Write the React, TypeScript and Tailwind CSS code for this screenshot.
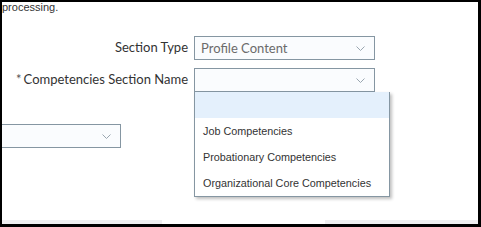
import React from "react";

const Chevron = () => (
  <svg width="9" height="5" viewBox="0 0 9 5" className="shrink-0">
    <path d="M0.5 0.5 L4.5 4.5 L8.5 0.5" fill="none" stroke="#9aa6b0" strokeWidth="1" />
  </svg>
);

const Select = ({ value, className = "" }: { value?: string; className?: string }) => (
  <div
    className={`h-[24px] flex items-center justify-between border border-[#8596a2] bg-[#fafcfe] pl-[6px] pr-[9px] ${className}`}
  >
    <span className="text-[13px] text-[#6b6b6b] leading-none font-['Lato',sans-serif]">{value}</span>
    <Chevron />
  </div>
);

export default function App() {
  const options = ["Job Competencies", "Probationary Competencies", "Organizational Core Competencies"];

  return (
    <div className="w-[481px] h-[227px] bg-black pt-[2px] pl-[2px] pr-[3px] pb-[3px]">
      <div className="relative w-full h-full bg-white flex flex-col overflow-hidden">
        <div className="h-[10px] leading-[10px] text-[11px] text-[#333] font-['Liberation_Sans',Arial,sans-serif]">
          processing.
        </div>

        <div className="mt-[24px] grid grid-cols-[186px_181px] gap-x-[6px] gap-y-[8px] items-center font-['Lato',sans-serif] text-[13px] text-[#333]">
          <div className="text-right">Section Type</div>
          <Select value="Profile Content" />
          <div className="text-right">
            <span className="text-[#555] mr-[2px]">*</span>Competencies Section Name
          </div>
          <Select />
        </div>

        <Select className="mt-[32px] -ml-[4px] w-[123px]" />

        <div className="mt-auto flex justify-between">
          <div className="h-[4px] w-[160px] bg-[#eeeef0]" />
          <div className="h-[4px] w-[153px] bg-[#eeeef0]" />
        </div>

        <div className="absolute left-[192px] top-[90px] w-[196px] bg-white border border-t-0 border-[#8596a2] shadow-[2px_2px_3px_rgba(0,0,0,0.25)] font-['Liberation_Sans',Arial,sans-serif] text-[10.8px] text-[#333]">
          <div className="h-[26px] bg-[#e4f0fc]" />
          {options.map((o) => (
            <div key={o} className="h-[26px] flex items-center pl-[8px]">
              {o}
            </div>
          ))}
        </div>
      </div>
    </div>
  );
}
